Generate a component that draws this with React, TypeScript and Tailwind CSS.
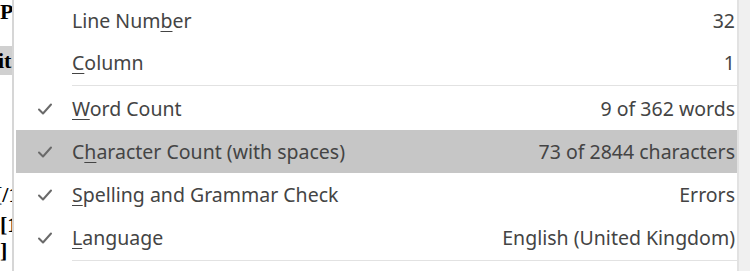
const FONT = { fontFamily: '"Segoe UI", "Noto Sans", "Open Sans", sans-serif' };

interface Item {
  label: React.ReactNode;
  value: string;
  checked?: boolean;
  active?: boolean;
  sepAfter?: boolean;
}

const U = ({ c }: { c: string }) => <span className="underline underline-offset-[3px] decoration-1">{c}</span>;

const ITEMS: Item[] = [
  { label: <>Line Num<U c="b" />er</>, value: '32' },
  { label: <><U c="C" />olumn</>, value: '1', sepAfter: true },
  { label: <><U c="W" />ord Count</>, value: '9 of 362 words', checked: true },
  { label: <>C<U c="h" />aracter Count (with spaces)</>, value: '73 of 2844 characters', checked: true, active: true },
  { label: <><U c="S" />pelling and Grammar Check</>, value: 'Errors', checked: true },
  { label: <><U c="L" />anguage</>, value: 'English (United Kingdom)', checked: true, sepAfter: true },
];

function Check() {
  return (
    <svg width="16" height="14" viewBox="0 0 16 14" fill="none">
      <path d="M2 7.5 L6 11.5 L14 2.5" stroke="#6a6a6a" strokeWidth="2" strokeLinecap="round" strokeLinejoin="round" />
    </svg>
  );
}

function DocStrip() {
  return (
    <div className="w-[12px] shrink-0 overflow-hidden bg-white text-[22px] font-bold leading-none text-black" style={{ fontFamily: '"Liberation Serif", serif' }}>
      <div className="pt-[1px] h-[46px] whitespace-nowrap">P</div>
      <div className="h-[29px] bg-[#d0d0d0] flex items-center whitespace-nowrap -ml-[2px]">it</div>
      <div className="h-[109px]" />
      <div className="h-[30px] whitespace-nowrap -ml-[5px]">[/1</div>
      <div className="h-[26px] whitespace-nowrap">[1</div>
      <div className="h-[28px] whitespace-nowrap">]</div>
    </div>
  );
}

export default function App() {
  return (
    <div className="flex h-[271px] w-[750px] overflow-hidden bg-white" style={FONT}>
      <DocStrip />
      <div className="w-[2px] shrink-0 bg-[#d6d6d6]" />
      <div className="flex-1 flex flex-col bg-white pl-[2px] text-[19.5px] text-[#444444]">
        {ITEMS.map((item, i) => (
          <div key={i}>
            <div className={`flex items-center ${i < 2 ? 'h-[42px]' : 'h-[43px]'} ${item.active ? 'bg-[#c6c6c6]' : ''}`}>
              <div className="w-[56px] flex justify-center pl-[2px]">{item.checked && <Check />}</div>
              <div className="flex-1 whitespace-nowrap">{item.label}</div>
              <div className="pr-[2px] whitespace-nowrap">{item.value}</div>
            </div>
            {item.sepAfter && (
              <div className="h-[3px] flex items-center pl-[56px]">
                <div className="h-px w-full bg-[#e2e2e2]" />
              </div>
            )}
          </div>
        ))}
      </div>
      <div className="w-[2px] shrink-0 bg-[#e2e2e2]" />
      <div className="w-[11px] shrink-0 bg-[#f0f0f0]" />
    </div>
  );
}
